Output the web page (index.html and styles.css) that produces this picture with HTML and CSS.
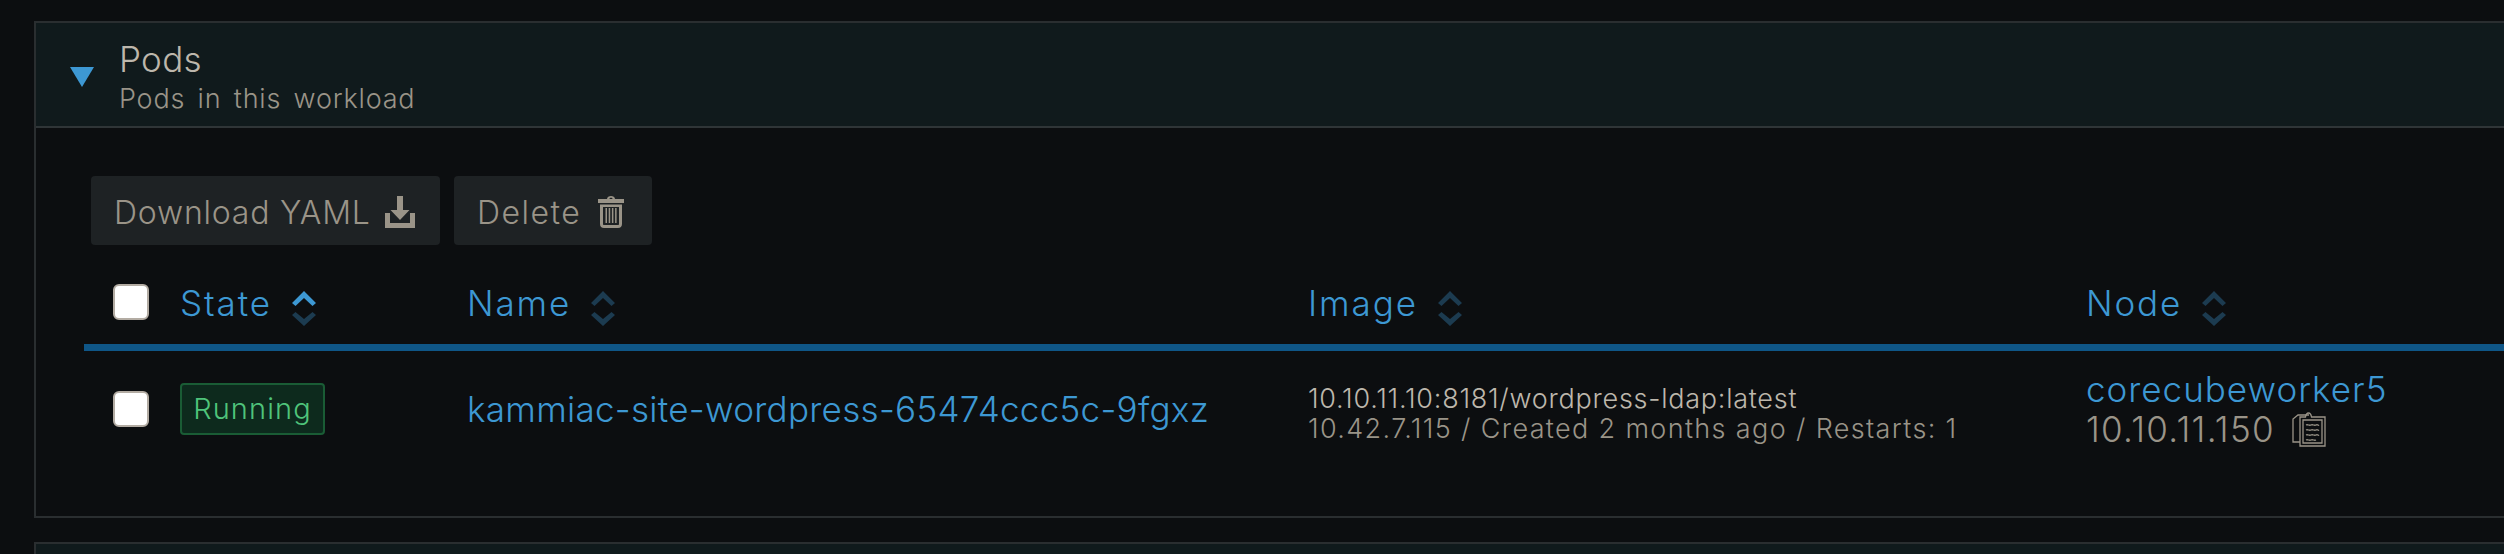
FILE: index.html
```html
<!DOCTYPE html>
<html lang="en">
<head>
<meta charset="utf-8">
<title>Pods</title>
<link rel="stylesheet" href="styles.css">
</head>
<body>
<section class="panel">
  <header class="panel-head">
    <svg class="caret" viewBox="0 0 24 20"><path d="M0 0H24L12 20Z"/></svg>
    <div class="head-text">
      <h2 class="title">Pods</h2>
      <p class="subtitle">Pods in this workload</p>
    </div>
  </header>
  <div class="panel-body">
    <div class="actions">
      <button class="btn btn-download">Download YAML
        <svg class="btn-icon-dl" viewBox="0 0 30 32"><path d="M12 0H18V14H24.500L15 24L5.500 14H12Z"/><path d="M0 17H5V27H25V17H30V32H0Z"/></svg>
      </button>
      <button class="btn btn-delete">Delete
        <svg class="btn-icon-tr" viewBox="0 0 26 32"><path fill-rule="evenodd" d="M9 3C9 1 11 0 13 0S17 1 17 3H26V7H0V3ZM11.500 3H14.500C14.500 2 13.700 1.800 13 1.800S11.500 2 11.500 3Z"/><path fill-rule="evenodd" d="M2 8.500H24V28C24 30.500 22.500 32 20 32H6C3.500 32 2 30.500 2 28ZM5 11V28C5 28.600 5.400 29 6 29H20C20.600 29 21 28.600 21 28V11Z"/><path d="M7.500 12H9V27H7.500ZM10.700 12H12.200V27H10.700ZM13.900 12H15.400V27H13.900ZM17.100 12H18.600V27H17.100Z"/></svg>
      </button>
    </div>
    <div class="grid grid-head">
      <div class="cell-check"><span class="check"></span></div>
      <div class="th"><span class="th-label th-state">State</span><svg class="sort" viewBox="0 0 24 35"><path class="active" d="M12 0L24 12L20.500 15L12 7L3.500 15L0 12Z"/><path d="M3.500 21L12 28L20.500 21L24 24L12 35L0 24Z"/></svg></div>
      <div class="th"><span class="th-label">Name</span><svg class="sort" viewBox="0 0 24 35"><path d="M12 0L24 12L20.500 15L12 7L3.500 15L0 12Z"/><path d="M3.500 21L12 28L20.500 21L24 24L12 35L0 24Z"/></svg></div>
      <div class="th"><span class="th-label">Image</span><svg class="sort" viewBox="0 0 24 35"><path d="M12 0L24 12L20.500 15L12 7L3.500 15L0 12Z"/><path d="M3.500 21L12 28L20.500 21L24 24L12 35L0 24Z"/></svg></div>
      <div class="th"><span class="th-label">Node</span><svg class="sort" viewBox="0 0 24 35"><path d="M12 0L24 12L20.500 15L12 7L3.500 15L0 12Z"/><path d="M3.500 21L12 28L20.500 21L24 24L12 35L0 24Z"/></svg></div>
    </div>
    <div class="grid grid-row">
      <div class="cell-check"><span class="check"></span></div>
      <div class="badge-cell"><span class="badge">Running</span></div>
      <div><a class="link">kammiac-site-wordpress-65474ccc5c-9fgxz</a></div>
      <div class="image-cell">
        <div class="image-name">10.10.11.10:8181/wordpress-ldap:latest</div>
        <div class="image-meta">10.42.7.115 / Created 2 months ago / Restarts: 1</div>
      </div>
      <div class="node-cell">
        <a class="link node-link">corecubeworker5</a>
        <div class="node-ip">10.10.11.150
          <svg class="clip" viewBox="0 0 34 35" fill="none" stroke="#9a9488" stroke-width="1.300"><path d="M8 30H1V7L6 3H17"/><path d="M8 5H13.500C14 2 15 1 16.500 1S19 2 19.500 5H33V34H8Z"/><path d="M11 8H30V31H11Z"/><path d="M14 13C16 12 17 14 19 13S22 14 24 13S26 14 27 13M14 18C16 17 17 19 19 18S22 19 24 18S26 19 27 18M14 23C16 22 17 24 19 23S22 24 24 23S26 24 27 23M14 28C16 27 17 29 19 28S22 29 24 28"/></svg>
        </div>
      </div>
    </div>
  </div>
</section>
<section class="panel-next"><div class="panel-next-head"></div></section>
</body>
</html>
```

FILE: styles.css
```css
* { box-sizing: border-box; }
html, body { margin: 0; height: 100%; }
body {
  background: #0c0e10;
  padding: 21px 0 0 34px;
  overflow: hidden;
  font-family: Inter, "Liberation Sans", sans-serif;
  font-weight: 300;
  color: #9a9488;
}
.panel {
  border: 2px solid #2a2e30;
  border-right: 0;
  height: 497px;
}
.panel-head {
  height: 105px;
  background: #101a1c;
  border-bottom: 2px solid #2f3537;
  display: flex;
  align-items: flex-start;
  padding-left: 34px;
}
.caret { width: 24px; height: 20px; margin-top: 44px; fill: #3d98d3; flex: none; }
.head-text { margin-left: 25px; padding-top: 16px; }
.title { margin: 0; font-size: 35px; line-height: 40px; font-weight: 300; color: #bdb7ac; letter-spacing: 0.3px; }
.subtitle { margin: 5px 0 0; font-size: 27px; line-height: 30px; color: #9a9488; letter-spacing: 0.8px; word-spacing: 4px; }
.panel-body { padding: 48px 0 0 48px; }
.actions { display: flex; gap: 14px; margin-left: 7px; height: 69px; }
.btn {
  height: 69px;
  background: #1e2224;
  border: 0;
  border-radius: 4px;
  color: #9a9488;
  font-family: inherit;
  font-weight: 300;
  font-size: 32px;
  letter-spacing: 0.8px;
  display: flex;
  align-items: center;
  padding: 3px 0 0 23px;
  white-space: nowrap;
}
.btn-download { width: 349px; }
.btn-delete { width: 198px; letter-spacing: 1.5px; }
.btn svg { fill: #9a9488; flex: none; }
.btn-icon-dl { width: 30px; height: 32px; margin-left: 14px; }
.btn-icon-tr { width: 26px; height: 32px; margin-left: 17px; }
.grid {
  display: grid;
  grid-template-columns: 96px 287px 841px 778px 1fr;
  align-items: center;
}
.grid-head { height: 106px; padding-top: 15px; border-bottom: 7px solid #0f5687; }
.grid-row { height: 116px; }
.cell-check { padding-left: 29px; display: flex; }
.check {
  display: block;
  width: 36px;
  height: 36px;
  background: #fff;
  border: 2px solid #b3aca3;
  border-radius: 6px;
}
.th {
  display: flex;
  align-items: center;
  font-size: 35px;
  color: #3d98d3;
  gap: 20px;
  letter-spacing: 1.9px;
}
.th-label { margin-top: 2px; }
.sort { width: 24px; height: 35px; fill: #1c3b50; flex: none; margin-top: 13px; }
.sort .active { fill: #3d98d3; }
.badge-cell { display: flex; }
.badge {
  display: block;
  height: 52px;
  width: 145px;
  line-height: 48px;
  text-align: center;
  font-size: 29px;
  color: #4fc47b;
  background: #0d2a1d;
  border: 2px solid #1a5c35;
  border-radius: 4px;
  letter-spacing: 1.1px;
}
.link { color: #3d98d3; font-size: 35px; letter-spacing: 0.3px; }
.image-cell { font-size: 27px; line-height: 30px; margin-top: 10px; }
.image-name { color: #bdb7ac; letter-spacing: 0.74px; }
.image-meta { color: #9a9488; letter-spacing: 1.35px; }
.node-cell { margin-top: 0; }
.node-link { display: block; line-height: 40px; letter-spacing: 1px; }
.node-ip {
  display: flex;
  align-items: center;
  gap: 17px;
  font-size: 35px;
  line-height: 40px;
  letter-spacing: 1.3px;
}
.clip { width: 34px; height: 35px; flex: none; }
.panel-next { margin-top: 24px; height: 12px; border: 2px solid #2a2e30; border-right: 0; border-bottom: 0; }
.panel-next-head { height: 100%; background: #101a1c; }
```
